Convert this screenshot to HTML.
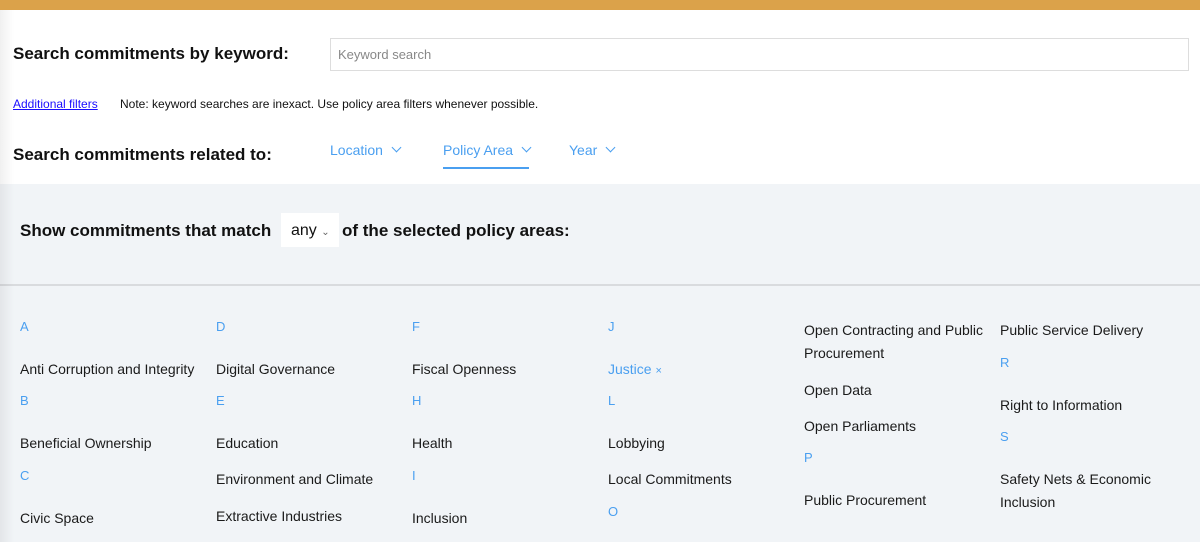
<!DOCTYPE html>
<html><head><meta charset="utf-8"><style>
*{margin:0;padding:0;box-sizing:border-box}
body{width:1200px;height:542px;overflow:hidden;background:#fff;font-family:"Liberation Sans",sans-serif;position:relative;color:#111}
.a{position:absolute;white-space:nowrap}
.h{font-weight:bold;font-size:17px;color:#111}
.b{color:#4a9ff0;font-size:13px}
.t{font-size:14px;color:#1a1a1a}
.chev{display:inline-block;width:7px;height:7px;border-right:1px solid #4a9ff0;border-bottom:1px solid #4a9ff0;transform:rotate(45deg);margin-left:10px;position:relative;top:-4px}
</style></head><body>
<div class="a" style="left:0;top:0;width:1200px;height:10px;background:#dba24a"></div>
<div class="a" style="left:0;top:184px;width:1200px;height:358px;background:#f1f4f7"></div>
<div class="a" style="left:0;top:284px;width:1200px;height:2px;background:#d9dbde"></div>
<div class="a" style="left:0;top:10px;width:14px;height:532px;background:linear-gradient(to right,rgba(0,0,0,0.06),rgba(0,0,0,0))"></div>

<div class="a h" style="left:13px;top:44px">Search commitments by keyword:</div>
<div class="a" style="left:330px;top:38px;width:859px;height:33px;border:1px solid #ddd;background:#fff;font-size:13px;color:#888;padding:8px 7px">Keyword search</div>
<div class="a" style="left:13px;top:97px;font-size:12px;color:#1a0dff;text-decoration:underline">Additional filters</div>
<div class="a" style="left:120px;top:97px;font-size:12px;color:#111">Note: keyword searches are inexact. Use policy area filters whenever possible.</div>
<div class="a h" style="left:13px;top:145px">Search commitments related to:</div>
<div class="a b" style="left:330px;top:142px;font-size:14px">Location<span class="chev"></span></div>
<div class="a b" style="left:443px;top:142px;font-size:14px">Policy Area<span class="chev"></span></div>
<div class="a" style="left:443px;top:167px;width:86px;height:2px;background:#4a9ff0"></div>
<div class="a b" style="left:569px;top:142px;font-size:14px">Year<span class="chev"></span></div>

<div class="a h" style="left:20px;top:221px">Show commitments that match</div>
<div class="a" style="left:281px;top:213px;width:58px;height:34px;background:#fff;font-size:16px;padding:9px 10px">any <span style="font-size:10px;color:#666">⌄</span></div>
<div class="a h" style="left:342px;top:221px">of the selected policy areas:</div>

<div class="a b" style="left:20px;top:319px">A</div>
<div class="a t" style="left:20px;top:361px">Anti Corruption and Integrity</div>
<div class="a b" style="left:20px;top:393px">B</div>
<div class="a t" style="left:20px;top:435px">Beneficial Ownership</div>
<div class="a b" style="left:20px;top:468px">C</div>
<div class="a t" style="left:20px;top:510px">Civic Space</div>

<div class="a b" style="left:216px;top:319px">D</div>
<div class="a t" style="left:216px;top:361px">Digital Governance</div>
<div class="a b" style="left:216px;top:393px">E</div>
<div class="a t" style="left:216px;top:435px">Education</div>
<div class="a t" style="left:216px;top:471px">Environment and Climate</div>
<div class="a t" style="left:216px;top:508px">Extractive Industries</div>

<div class="a b" style="left:412px;top:319px">F</div>
<div class="a t" style="left:412px;top:361px">Fiscal Openness</div>
<div class="a b" style="left:412px;top:393px">H</div>
<div class="a t" style="left:412px;top:435px">Health</div>
<div class="a b" style="left:412px;top:468px">I</div>
<div class="a t" style="left:412px;top:510px">Inclusion</div>

<div class="a b" style="left:608px;top:319px">J</div>
<div class="a b" style="left:608px;top:361px;font-size:14px">Justice <span style="font-size:11px">×</span></div>
<div class="a b" style="left:608px;top:393px">L</div>
<div class="a t" style="left:608px;top:435px">Lobbying</div>
<div class="a t" style="left:608px;top:471px">Local Commitments</div>
<div class="a b" style="left:608px;top:504px">O</div>

<div class="a t" style="left:804px;top:319px;line-height:23px">Open Contracting and Public<br>Procurement</div>
<div class="a t" style="left:804px;top:382px">Open Data</div>
<div class="a t" style="left:804px;top:418px">Open Parliaments</div>
<div class="a b" style="left:804px;top:450px">P</div>
<div class="a t" style="left:804px;top:492px">Public Procurement</div>

<div class="a t" style="left:1000px;top:322px">Public Service Delivery</div>
<div class="a b" style="left:1000px;top:355px">R</div>
<div class="a t" style="left:1000px;top:397px">Right to Information</div>
<div class="a b" style="left:1000px;top:429px">S</div>
<div class="a t" style="left:1000px;top:468px;line-height:23px">Safety Nets &amp; Economic<br>Inclusion</div>
</body></html>
